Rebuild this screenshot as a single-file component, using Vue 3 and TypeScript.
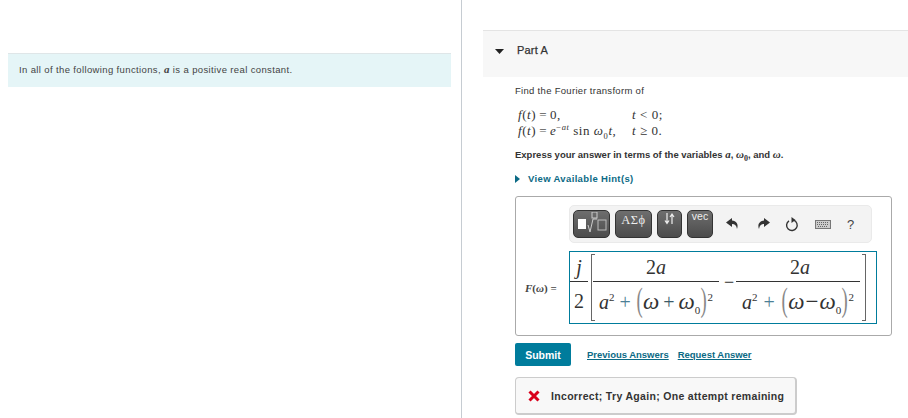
<script setup lang="ts">
const tools: string[] = ['ΑΣϕ'];
</script>

<template>
  <div class="page">
    <aside class="left">
      <div class="note">In all of the following functions, <i class="mi">a</i> is a positive real constant.</div>
    </aside>
    <main class="right">
      <header class="part"><svg class="caret" width="9" height="5" viewBox="0 0 9 5"><path d="M0 0h9L4.500 5z" fill="#222" /></svg><span>Part A</span></header>
      <section class="body">
        <p class="find">Find the Fourier transform of</p>
        <div class="cases">
          <div class="case"><span class="lhs"><i>f</i>(<i>t</i>)<span class="eq">=</span>0,</span><span><i>t</i> &lt; 0;</span></div>
          <div class="case"><span class="lhs"><i>f</i>(<i>t</i>)<span class="eq">=</span><i>e</i><sup>−<i>at</i></sup> sin <i>ω</i><sub>0</sub><i>t</i>,</span><span><i>t</i> ≥ 0.</span></div>
        </div>
        <p class="express">Express your answer in terms of the variables <i class="mi">a</i>, <i class="mi">ω</i><sub class="ms">0</sub>, and <i class="mi">ω</i>.</p>
        <p class="hint"><svg width="5" height="8" viewBox="0 0 5 8"><path d="M0 0l5 4-5 4z" fill="#0b6a85" /></svg>View Available Hint(s)</p>
        <div class="answer">
          <div class="toolbar">
            <div class="btn b1">
              <svg width="32" height="24" viewBox="0 0 32 24"><rect x="2" y="7" width="8" height="10" fill="#fff" /><path d="M12 13l2 7 3-13h4" fill="none" stroke="#ccc" /><rect x="16" y="0" width="5" height="6" fill="none" stroke="#ccc" /><rect x="22" y="8" width="8" height="10" fill="none" stroke="#bbb" /></svg>
            </div>
            <div v-for="t in tools" :key="t" class="btn b2">{{ t }}</div>
            <div class="btn b3">
              <svg width="14" height="14" viewBox="0 0 14 14"><path d="M4 1v10M2 8.500l2 3 2-3M9 12V2M7 5l2-3 2 3" fill="none" stroke="#eee" stroke-width="1.200" /></svg>
            </div>
            <div class="btn b4">vec</div>
            <div class="tools">
              <svg width="14" height="12" viewBox="0 0 14 12"><path d="M6 0L0 4.500 6 9V6c3 0 4.500 1.500 5 5 2-5-1-8-5-8.500z" fill="#333" /></svg>
              <svg width="14" height="12" viewBox="0 0 14 12"><path d="M8 0l6 4.500L8 9V6c-3 0-4.500 1.500-5 5-2-5 1-8 5-8.500z" fill="#333" /></svg>
              <svg width="14" height="15" viewBox="0 0 14 15"><path d="M8.500 3.200A5.300 5.300 0 1 1 4 3.800" fill="none" stroke="#333" stroke-width="1.400" /><path d="M6.500 0v6l4-3z" fill="#333" /></svg>
              <svg width="16" height="9" viewBox="0 0 16 9"><rect x=".5" y=".5" width="15" height="8" fill="#ccc" stroke="#777" /><path d="M2 2.500h12M2 4.500h12M3 6.500h10" stroke="#666" stroke-dasharray="1 1" /></svg>
              <span class="q">?</span>
            </div>
          </div>
          <div class="formula">
            <span class="label"><i>F</i>(<i>ω</i>) =</span>
            <div class="input">
              <div class="frac small"><div class="num"><i>j</i></div><div class="den">2</div></div>
              <span class="bk bk-l"></span>
              <div class="frac first"><div class="num">2<i>a</i></div><div class="den"><i>a</i><sup>2</sup><b class="plus">+</b><span class="paren">(</span><i class="w">ω</i><b class="plus">+</b><i class="w">ω</i><sub>0</sub><span class="paren">)</span><sup>2</sup></div></div>
              <span class="minus">−</span>
              <div class="frac second"><div class="num">2<i>a</i></div><div class="den"><i>a</i><sup>2</sup><b class="plus">+</b><span class="paren">(</span><i class="w">ω</i><b class="dash">−</b><i class="w">ω</i><sub>0</sub><span class="paren">)</span><sup>2</sup></div></div>
              <span class="bk bk-r"></span>
            </div>
          </div>
        </div>
        <div class="actions">
          <button class="submit">Submit</button>
          <a>Previous Answers</a>
          <a>Request Answer</a>
        </div>
        <div class="result">
          <svg width="12" height="12" viewBox="0 0 12 12"><path d="M1.500 1.500l9 9M10.500 1.500l-9 9" stroke="#d9001b" stroke-width="3" /></svg>
          <span>Incorrect; Try Again; One attempt remaining</span>
        </div>
      </section>
    </main>
  </div>
</template>

<style>
body { margin: 0; background: #fff; }
</style>

<style scoped>
.page { display: flex; width: 908px; height: 418px; overflow: hidden; font-family: "Liberation Sans", Arial, sans-serif; color: #333; }
.left { box-sizing: border-box; width: 462px; padding: 53px 0 0 8px; border-right: 1px solid #c6ccd2; flex: none; }
.note { box-sizing: border-box; width: 443px; height: 34px; padding: 9px 11px 0; border-top: 1px solid #dfe6e8; background: #e5f5f7; font-size: 9.500px; letter-spacing: .37px; color: #444; }
.mi { font-family: "Liberation Serif", serif; font-weight: 700; font-size: 11px; }
.ms { font-family: "Liberation Serif", serif; font-size: 8px; line-height: 0; }
.right { flex: 1; padding: 30px 0 0 21px; min-width: 0; }
.part { box-sizing: border-box; display: flex; align-items: flex-start; height: 47px; padding: 13px 0 0 12px; background: #f7f7f7; border-top: 1px solid #e4e4e4; font-size: 11px; letter-spacing: .2px; -webkit-text-stroke: .25px #333; color: #333; }
.caret { margin: 5px 13px 0 0; }
.body { padding-left: 32px; }
.find { margin: 8px 0 0; font-size: 9.500px; line-height: 12px; letter-spacing: .3px; color: #333; }
.cases { margin-top: 10px; font-family: "Liberation Serif", serif; font-size: 13px; line-height: 16px; letter-spacing: .55px; color: #333; }
.case { display: flex; }
.lhs { width: 117px; white-space: nowrap; padding-left: 3px; box-sizing: border-box; }
.eq { margin: 0 3px; color: #555; }
.case sup { font-size: 8.500px; line-height: 0; }
.case sub { font-size: 8.500px; line-height: 0; }
.express { margin: 9px 0 0; font-size: 9.500px; line-height: 13px; font-weight: 700; letter-spacing: 0; color: #333; }
.hint { display: flex; align-items: center; gap: 8px; margin: 12px 0 0; font-size: 9.500px; line-height: 12px; font-weight: 700; letter-spacing: .35px; color: #0b6a85; }
.answer { box-sizing: border-box; width: 377px; height: 140px; margin-top: 11px; padding: 8px 0 0 53px; border: 1px solid #aaa; border-radius: 3px; }
.toolbar { box-sizing: border-box; display: flex; align-items: flex-start; width: 303px; height: 38px; padding: 4px 0 0 3px; gap: 5px; background: #f3f3f3; border: 1px solid #eaeaea; border-radius: 5px; }
.btn { box-sizing: border-box; display: flex; align-items: flex-start; justify-content: center; height: 28px; border: 1px solid #333; border-radius: 5px; background: linear-gradient(#6e6e6e, #4c4c4c); color: #eee; }
.b1 { width: 37px; padding-top: 1px; }
.b2 { width: 37px; padding-top: 2px; font-family: "Liberation Serif", serif; font-size: 12.500px; letter-spacing: .5px; }
.b3 { width: 25px; padding-top: 1px; }
.b4 { width: 26px; font-size: 10.500px; line-height: 11px; }
.tools { display: flex; align-items: center; height: 28px; margin-left: 8px; gap: 15.500px; color: #444; }
.q { font-size: 13px; margin-left: 1px; color: #444; }
.formula { display: flex; align-items: center; margin-top: 8px; }
.label { width: 0; margin-left: -44px; margin-right: 44px; white-space: nowrap; font-family: "Liberation Serif", serif; font-size: 11px; font-weight: 700; color: #444; }
.input { box-sizing: border-box; display: flex; align-items: flex-start; width: 308px; height: 73px; padding-left: 0; border: 1.500px solid #007c9c; font-family: "Liberation Serif", serif; font-size: 20px; color: #333; }
.frac { display: flex; flex-direction: column; align-items: center; flex: none; }
.num { box-sizing: border-box; width: 100%; height: 30px; padding-top: 1px; border-bottom: 1px solid #333; text-align: center; line-height: 28px; }
.den { height: 40px; line-height: 39px; white-space: nowrap; text-align: center; }
.small { width: 18px; }
.bk { flex: none; box-sizing: border-box; width: 4px; height: 67px; margin-top: 2px; border: 1px solid #666; }
.bk-l { margin-left: 3px; margin-right: -2px; border-right: 0; }
.bk-r { margin-left: 2px; border-left: 0; }
.first { width: 126px; }
.second { width: 124px; }
.second .num { padding-left: 4px; }
.minus { flex: none; width: 12px; margin: 21px 1px 0 4px; text-align: center; font-size: 18px; line-height: 18px; }
.w { font-size: 23px; }
.den b { font-weight: 400; }
.plus { margin: 0 5px; color: #4c7f96; }
.first .w + .plus { margin: 0 4px; color: #3c5a68; }
.second .plus { margin: 0 6px; }
.dash { margin: 0 1px; font-size: 23px; }
.den sup { font-size: 11px; line-height: 0; }
.den sub { font-size: 11px; line-height: 0; }
.paren { display: inline-block; font-weight: 400; font-size: 34px; line-height: 0; color: #888; transform: scaleX(.55) translateY(2px); margin: 0 -2px; }
.actions { display: flex; align-items: center; height: 23px; margin-top: 7px; font-size: 9.500px; font-weight: 700; letter-spacing: -.02px; color: #0b6a85; }
.actions a { text-decoration: underline; margin-right: 9px; }
.submit { box-sizing: border-box; width: 56px; height: 23px; margin-right: 16px; padding: 0; border: 0; border-radius: 2px; background: #007c9c; color: #fff; font-family: inherit; font-size: 10.500px; font-weight: 700; letter-spacing: 0; }
.result { box-sizing: border-box; display: flex; align-items: center; gap: 11px; width: 282px; height: 38px; margin-top: 11px; padding-left: 12px; border: 1px solid #ccc; border-bottom-width: 2px; border-right-width: 2px; border-radius: 4px; background: #f8f8f8; font-size: 10.500px; font-weight: 700; letter-spacing: .32px; color: #333; white-space: nowrap; }
</style>
